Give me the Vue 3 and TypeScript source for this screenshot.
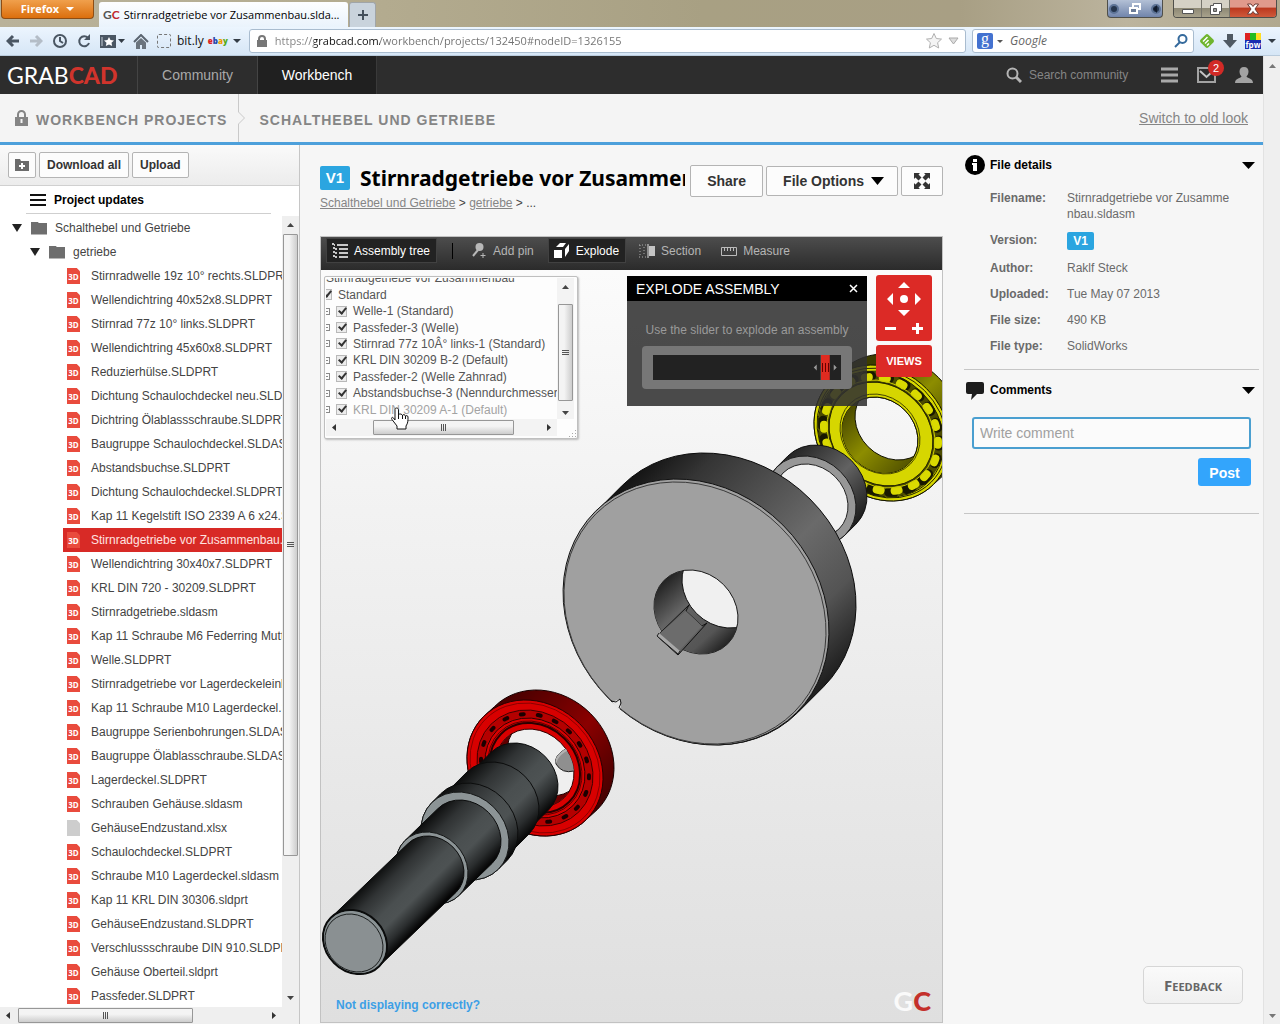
<script setup lang="ts">
import { ref } from 'vue'

interface TreeFile {
  name: string
  kind: '3d' | 'sheet'
}

interface Part {
  label: string
  shown: boolean
  dim?: boolean
}

interface Cylinder {
  id: string
  front: [number, number]
  back: [number, number]
  r: number
  face: string
}

const model = (name: string): TreeFile => ({ name, kind: '3d' })

const files: TreeFile[] = [
  model('Stirnradwelle 19z 10° rechts.SLDPRT'),
  model('Wellendichtring 40x52x8.SLDPRT'),
  model('Stirnrad 77z 10° links.SLDPRT'),
  model('Wellendichtring 45x60x8.SLDPRT'),
  model('Reduzierhülse.SLDPRT'),
  model('Dichtung Schaulochdeckel neu.SLDPRT'),
  model('Dichtring Ölablassschraube.SLDPRT'),
  model('Baugruppe Schaulochdeckel.SLDASM'),
  model('Abstandsbuchse.SLDPRT'),
  model('Dichtung Schaulochdeckel.SLDPRT'),
  model('Kap 11 Kegelstift ISO 2339 A 6 x24.SLDPRT'),
  model('Stirnradgetriebe vor Zusammenbau.sldasm'),
  model('Wellendichtring 30x40x7.SLDPRT'),
  model('KRL DIN 720 - 30209.SLDPRT'),
  model('Stirnradgetriebe.sldasm'),
  model('Kap 11 Schraube M6 Federring Mutter.SLDASM'),
  model('Welle.SLDPRT'),
  model('Stirnradgetriebe vor Lagerdeckeleinbau.sldasm'),
  model('Kap 11 Schraube M10 Lagerdeckel.SLDPRT'),
  model('Baugruppe Serienbohrungen.SLDASM'),
  model('Baugruppe Ölablasschraube.SLDASM'),
  model('Lagerdeckel.SLDPRT'),
  model('Schrauben Gehäuse.sldasm'),
  { name: 'GehäuseEndzustand.xlsx', kind: 'sheet' },
  model('Schaulochdeckel.SLDPRT'),
  model('Schraube M10 Lagerdeckel.sldasm'),
  model('Kap 11 KRL DIN 30306.sldprt'),
  model('GehäuseEndzustand.SLDPRT'),
  model('Verschlussschraube DIN 910.SLDPRT'),
  model('Gehäuse Oberteil.sldprt'),
  model('Passfeder.SLDPRT')
]

const selected = ref(11)

const parts = ref<Part[]>([
  { label: 'Welle-1 (Standard)', shown: true },
  { label: 'Passfeder-3 (Welle)', shown: true },
  { label: 'Stirnrad 77z 10Â° links-1 (Standard)', shown: true },
  { label: 'KRL DIN 30209 B-2 (Default)', shown: true },
  { label: 'Passfeder-2 (Welle Zahnrad)', shown: true },
  { label: 'Abstandsbuchse-3 (Nenndurchmesser)', shown: true },
  { label: 'KRL DIN 30209 A-1 (Default)', shown: true, dim: true }
])
const allShown = ref(true)
const explode = ref(98)
const comment = ref('')
const address = ref('https://grabcad.com/workbench/projects/132450#nodeID=1326155')
const webSearch = ref('')
const siteSearch = ref('')

// Every round section is seen along the same diagonal axis, so a circle of
// radius r becomes an ellipse turned by 45 degrees.
const major = (r: number) => r * 1.07
const minor = (r: number) => r * 0.925
const reach = (r: number) => major(r) * Math.SQRT1_2

function ring(c: [number, number], r: number): string {
  const k = reach(r)
  const arc = `A${major(r)} ${minor(r)} 45 0 0`
  return `M${c[0] + k} ${c[1] + k}${arc} ${c[0] - k} ${c[1] - k}${arc} ${c[0] + k} ${c[1] + k}Z`
}

function hull(front: [number, number], back: [number, number], r: number): string {
  const k = reach(r)
  const arc = `A${major(r)} ${minor(r)} 45 0 0`
  return (
    `M${front[0] + k} ${front[1] + k}L${back[0] + k} ${back[1] + k}` +
    `${arc} ${back[0] - k} ${back[1] - k}L${front[0] - k} ${front[1] - k}` +
    `${arc} ${front[0] + k} ${front[1] + k}Z`
  )
}

const shaft: Cylinder[] = [
  { id: 'seat', front: [498, 803], back: [520, 781], r: 38, face: '#45494a' },
  { id: 'shoulder', front: [474, 827], back: [498, 803], r: 41, face: '#45494a' },
  { id: 'collar', front: [465, 836], back: [474, 827], r: 44, face: '#8c9496' },
  { id: 'body', front: [432, 868], back: [465, 836], r: 36, face: '#8c9496' },
  { id: 'journal', front: [355, 942], back: [432, 868], r: 32, face: '#7e8688' }
]
</script>

<template>
  <div class="window">
    <header class="titlebar">
      <button class="firefox" type="button">Firefox <span class="caret white"></span></button>
      <div class="tab">
        <span class="favicon"><b class="g">G</b><b class="c">C</b></span>
        <span class="tab-name">Stirnradgetriebe vor Zusammenbau.slda...</span>
      </div>
      <button class="newtab" type="button" aria-label="New tab">
        <svg width="12" height="12" viewBox="0 0 12 12"><path d="M6 1v10M1 6h10" stroke="#44505c" stroke-width="2" /></svg>
      </button>
      <span class="grow"></span>
      <div class="mini-controls">
        <button type="button" aria-label="Previous view"><svg width="13" height="14" viewBox="0 0 13 14"><circle cx="6" cy="7" r="4" fill="#26364e" stroke="#5d7396" stroke-width="2" /></svg></button>
        <button class="wide" type="button" aria-label="Cascade"><svg width="14" height="12" viewBox="0 0 14 12"><path d="M5 4V1h7v5H9" fill="none" stroke="#fff" stroke-width="2" /><path d="M2 5h7v5H2z" fill="#6c7c98" stroke="#fff" stroke-width="2" /></svg></button>
        <button type="button" aria-label="Next view"><svg width="13" height="14" viewBox="0 0 13 14"><circle cx="7" cy="7" r="4" fill="#26364e" stroke="#5d7396" stroke-width="2" /><path d="M8 3v8L4 7z" fill="#101a2c" /></svg></button>
      </div>
      <div class="controls">
        <button type="button" aria-label="Minimize"><svg width="14" height="14" viewBox="0 0 14 14"><path d="M1.500 7.500h11v4h-11z" fill="#fff" stroke="#555" /></svg></button>
        <button type="button" aria-label="Restore"><svg width="14" height="14" viewBox="0 0 14 14"><path d="M4.500 1.500h8v8h-2v3h-9v-9h3z" fill="#fff" stroke="#555" /><path d="M4.500 6.500h3v3h-3z" fill="#999" stroke="#555" /></svg></button>
        <button class="close" type="button" aria-label="Close"><svg width="14" height="14" viewBox="0 0 14 14"><path d="M1.500 2h3.500l2 2.500L9 2h3.500L9 7l3.500 5H9L7 9.500 5 12H1.500L5 7z" fill="#fff" stroke="#6b3a35" /></svg></button>
      </div>
    </header>

    <nav class="navbar" aria-label="Browser">
      <button type="button" aria-label="Back"><svg width="14" height="14" viewBox="0 0 14 14"><path d="M7 2 2 7l5 5M2 7h11" fill="none" stroke="#4a5663" stroke-width="3" /></svg></button>
      <button type="button" aria-label="Forward" class="n2"><svg width="14" height="14" viewBox="0 0 14 14"><path d="M7 2l5 5-5 5M12 7H1" fill="none" stroke="#b4bdc7" stroke-width="3" /></svg></button>
      <button type="button" aria-label="History" class="n2"><svg width="16" height="16" viewBox="0 0 16 16"><circle cx="8" cy="8" r="6" fill="none" stroke="#4a5663" stroke-width="2" /><path d="M8 4v4l3 2" fill="none" stroke="#4a5663" stroke-width="2" /></svg></button>
      <button type="button" aria-label="Reload" class="n2"><svg width="14" height="14" viewBox="0 0 14 14"><path d="M11 4a5 5 0 1 0 1 5" fill="none" stroke="#4a5663" stroke-width="2" /><path d="M13 0v6H7z" fill="#4a5663" /></svg></button>
      <button type="button" aria-label="Bookmarks" class="n2"><svg width="25" height="15" viewBox="0 0 25 15"><path d="M0 1h16v13H0z" fill="#4a5663" /><path d="M2 3v9" stroke="#c5ced8" /><path d="m9 3 1.500 3 3.500.4-2.500 2.300.7 3.300L9 10.400 5.800 12l.7-3.300L4 6.400 7.500 6z" fill="#fff" /><path d="M18 5h7l-3.500 4z" fill="#333c46" /></svg></button>
      <button type="button" aria-label="Home" class="n3"><svg width="16" height="15" viewBox="0 0 16 15"><path d="M1 8 8 1l7 7" fill="none" stroke="#5b6570" stroke-width="2" /><path d="M3 8.500 8 4l5 4.500V15H9v-4H7v4H3z" fill="#6b747e" /></svg></button>
      <button type="button" aria-label="Bookmark" class="n3 bitly"><span class="dashed"></span>bit.ly</button>
      <button type="button" aria-label="ebay" class="ebay"><b>e</b><b>b</b><b>a</b><b>y</b></button>
      <span class="caret"></span>
      <div class="urlbox">
        <svg width="10" height="12" viewBox="0 0 10 12"><path d="M2 6V4a3 3 0 0 1 6 0v2" fill="none" stroke="#777" stroke-width="2" /><path d="M0 5h10v7H0z" fill="#777" /></svg>
        <input v-model="address" class="url" type="text" aria-label="Address" />
        <svg width="18" height="18" viewBox="0 0 18 18"><path d="m9 1.500 2.300 5 5.200.6-3.900 3.600 1.100 5.300L9 13.300 4.300 16l1.100-5.300L1.500 7.100l5.200-.6z" fill="#f4f4f4" stroke="#b0b0b0" /></svg>
        <svg class="drop" width="11" height="8" viewBox="0 0 11 8"><path d="M1 1h9L5.500 7z" fill="#ddd" stroke="#aaa" /></svg>
      </div>
      <div class="searchbox">
        <span class="gicon">g</span>
        <span class="caret small"></span>
        <input v-model="webSearch" type="text" placeholder="Google" aria-label="Web search" />
        <svg width="14" height="14" viewBox="0 0 14 14"><circle cx="8.500" cy="5" r="4" fill="none" stroke="#356a9c" stroke-width="2" /><path d="m6 8-5 5" stroke="#356a9c" stroke-width="2" /></svg>
      </div>
      <button type="button" aria-label="Feedly"><svg width="16" height="16" viewBox="0 0 16 16"><rect x="2.500" y="2.500" width="11" height="11" rx="2" transform="rotate(45 8 8)" fill="#6fb52e" /><path d="m4 8.500 4.500-4.500M6 10.500 9.500 7M8 12.500l2-2" stroke="#fff" stroke-width="1.500" /></svg></button>
      <button type="button" aria-label="Downloads" class="n3"><svg width="14" height="14" viewBox="0 0 14 14"><path d="M4 0h6v6h4l-7 8-7-8h4z" fill="#4f5963" /></svg></button>
      <button type="button" class="fpw n3">fpw</button>
      <span class="caret last"></span>
    </nav>

    <div class="viewport">
      <div class="page">
        <header class="sitebar">
          <a class="logo" href="#">GRAB<b>CAD</b></a>
          <a class="sitelink" href="#">Community</a>
          <a class="sitelink active" href="#">Workbench</a>
          <span class="grow"></span>
          <label class="sitesearch">
            <svg width="16" height="16" viewBox="0 0 16 16"><circle cx="6.500" cy="6.500" r="5" fill="none" stroke="#b5b5b5" stroke-width="2" /><path d="m10 10 5 5" stroke="#b5b5b5" stroke-width="3" /></svg>
            <input v-model="siteSearch" type="text" placeholder="Search community" aria-label="Search community" />
          </label>
          <button type="button" aria-label="Menu"><svg width="17" height="16" viewBox="0 0 17 16"><path d="M0 2h17M0 8h17M0 14h17" stroke="#a9a9a9" stroke-width="3" /></svg></button>
          <button type="button" class="mail" aria-label="Messages">
            <svg width="19" height="16" viewBox="0 0 19 16"><path d="M1 1h17v14H1z" fill="none" stroke="#a3a3a3" stroke-width="2" /><path d="m3 4 6.500 6L16 4" fill="none" stroke="#c4c4c4" stroke-width="2" /></svg>
            <span class="badge">2</span>
          </button>
          <button type="button" class="user" aria-label="Account"><svg width="18" height="16" viewBox="0 0 18 16"><path d="M9 0c3 0 4.500 2 4.500 4.500 0 2-1 4-2 5 .2 1.500 6.500 1.500 6.500 6.500H0c0-5 6.300-5 6.500-6.500-1-1-2-3-2-5C4.500 2 6 0 9 0z" fill="#a3a3a3" /></svg></button>
        </header>

        <nav class="crumbs" aria-label="Projects">
          <a class="crumb first" href="#">
            <svg width="13" height="16" viewBox="0 0 13 16"><path d="M3 8V4.500a3.500 3.500 0 0 1 7 0V8" fill="none" stroke="#858585" stroke-width="2" /><path d="M0 7h13v9H0z" fill="#858585" /><path d="M6.500 9v4" stroke="#f4f4f4" stroke-width="2" /></svg>
            WORKBENCH PROJECTS
          </a>
          <svg class="chevron" width="8" height="48" viewBox="0 0 8 48"><path d="M.5 0v18l6 6-6 6v18" fill="none" stroke="#c9c9c9" /></svg>
          <a class="crumb" href="#">SCHALTHEBEL UND GETRIEBE</a>
          <span class="grow"></span>
          <a class="switch" href="#">Switch to old look</a>
        </nav>

        <div class="columns">
          <aside class="sidebar">
            <div class="side-tools">
              <button class="btn" type="button" aria-label="New folder"><svg width="14" height="12" viewBox="0 0 14 12"><path d="M0 0h5l1 2h8v10H0z" fill="#6b6b6b" /><path d="M7 4v6M4 7h6" stroke="#fff" stroke-width="2" /></svg></button>
              <button class="btn" type="button">Download all</button>
              <button class="btn" type="button">Upload</button>
            </div>
            <a class="updates" href="#"><svg width="16" height="12" viewBox="0 0 16 12"><path d="M0 1h16M0 6h16M0 11h16" stroke="#111" stroke-width="2" /></svg>Project updates</a>
            <div class="tree-area">
              <ul class="tree">
                <li class="folder root"><span class="twist"></span><span class="dir"></span>Schalthebel und Getriebe</li>
                <li class="folder child"><span class="twist"></span><span class="dir"></span>getriebe</li>
                <li v-for="(f, i) in files" :key="f.name" class="file" :class="{ selected: i === selected }" @click="selected = i">
                  <span class="doc" :class="f.kind"><template v-if="f.kind === '3d'">3D</template></span>{{ f.name }}
                </li>
              </ul>
              <div class="vbar">
                <svg width="7" height="4" viewBox="0 0 7 4"><path d="M0 4 3.500 0 7 4z" fill="#444" /></svg>
                <div class="thumb tall"><i></i><i></i><i></i></div>
                <svg width="7" height="4" viewBox="0 0 7 4"><path d="M0 0h7L3.500 4z" fill="#444" /></svg>
              </div>
            </div>
            <div class="hbar">
              <svg width="4" height="7" viewBox="0 0 4 7"><path d="M4 0v7L0 3.500z" fill="#333" /></svg>
              <div class="thumb flat"><i></i><i></i><i></i></div>
              <span class="grow"></span>
              <svg width="4" height="7" viewBox="0 0 4 7"><path d="M0 0v7l4-3.500z" fill="#333" /></svg>
            </div>
          </aside>

          <main class="main">
            <div class="heading">
              <span class="version big">V1</span>
              <h1>Stirnradgetriebe vor Zusammenbau.sldasm</h1>
              <button class="btn large share" type="button">Share</button>
              <button class="btn large" type="button">File Options <svg width="13" height="8" viewBox="0 0 13 8"><path d="M0 0h13L6.500 8z" fill="#000" /></svg></button>
              <button class="btn large expand" type="button" aria-label="Full screen"><svg width="16" height="16" viewBox="0 0 16 16"><path d="M0 0h6L4.500 1.500l3 3-3 3-3-3L0 6zM16 0v6l-1.500-1.500-3 3-3-3 3-3L10 0zM0 16v-6l1.500 1.500 3-3 3 3-3 3L6 16zM16 16h-6l1.500-1.500-3-3 3-3 3 3L16 10z" fill="#333" /></svg></button>
            </div>
            <p class="path"><a href="#">Schalthebel und Getriebe</a> &gt; <a href="#">getriebe</a> &gt; ...</p>

            <section class="viewer" aria-label="Viewer">
              <div class="viewer-bar">
                <button class="tool on" type="button"><svg width="16" height="15" viewBox="0 0 16 15"><path d="M5 2h11M7 6h9M7 10h9M7 14h9" stroke="#fff" stroke-width="1.500" /><path d="M0 1h2M2 2h1M3 6h2M3 10h2M3 14h2M2 4v10" stroke="#fff" stroke-width="1.500" stroke-dasharray="2 2" /></svg>Assembly tree</button>
                <span class="sep"></span>
                <button class="tool pin" type="button"><svg width="15" height="15" viewBox="0 0 15 15"><circle cx="7.500" cy="4" r="4" fill="#b8b8b8" /><path d="M6 7 1 13" stroke="#b8b8b8" stroke-width="2" /><path d="M11 10v5M8.500 12.500h5" stroke="#b8b8b8" /></svg>Add pin</button>
                <button class="tool on" type="button"><svg width="16" height="15" viewBox="0 0 16 15"><path d="M0 7h8v8H0zM2 4l4-4h6L9 4zM11 6l4-5v7l-4 6z" fill="#fff" /></svg>Explode</button>
                <button class="tool section" type="button"><svg width="16" height="14" viewBox="0 0 16 14"><path d="M0 1h7M0 13h7M1 1v12M5 3v8" stroke="#aaa" stroke-dasharray="1 2" /><path d="M9 0v14" stroke="#ddd" /><path d="M10 2h6v10h-6z" fill="#c4c4c4" /></svg>Section</button>
                <button class="tool" type="button"><svg width="16" height="10" viewBox="0 0 16 10"><path d="M.5 1.500h15v8H.5zM3.500 2v3M6.500 2v3M9.500 2v3M12.500 2v3" fill="none" stroke="#bbb" /></svg>Measure</button>
              </div>

              <div class="stage">
                <svg class="scene" viewBox="321 270 621 752" preserveAspectRatio="xMidYMid slice" role="img" aria-label="Exploded gearbox assembly">
                  <defs>
                    <linearGradient v-for="s in shaft" :id="'g-' + s.id" :key="s.id" gradientUnits="userSpaceOnUse" :x1="s.front[0] - reach(s.r)" :y1="s.front[1] - reach(s.r)" :x2="s.front[0] + reach(s.r)" :y2="s.front[1] + reach(s.r)">
                      <stop offset="0" stop-color="#0c0d0d" /><stop offset=".22" stop-color="#303334" /><stop offset=".5" stop-color="#4a4f50" /><stop offset=".66" stop-color="#4d5253" /><stop offset=".85" stop-color="#2a2d2e" /><stop offset="1" stop-color="#050505" />
                    </linearGradient>
                    <linearGradient id="g-gear" gradientUnits="userSpaceOnUse" x1="600" y1="490" x2="825" y2="715">
                      <stop offset="0" stop-color="#0a0a0a" /><stop offset=".18" stop-color="#353535" /><stop offset=".55" stop-color="#6a6a6a" /><stop offset=".75" stop-color="#545454" /><stop offset=".92" stop-color="#222" /><stop offset="1" stop-color="#111" />
                    </linearGradient>
                    <linearGradient id="g-bore" gradientUnits="userSpaceOnUse" x1="664" y1="580" x2="728" y2="650">
                      <stop offset="0" stop-color="#222" /><stop offset=".35" stop-color="#646464" /><stop offset=".75" stop-color="#555" /><stop offset="1" stop-color="#161616" />
                    </linearGradient>
                    <linearGradient id="g-bush" gradientUnits="userSpaceOnUse" x1="785" y1="460" x2="855" y2="530">
                      <stop offset="0" stop-color="#262626" /><stop offset=".5" stop-color="#626262" /><stop offset="1" stop-color="#181818" />
                    </linearGradient>
                    <linearGradient id="g-yellow" gradientUnits="userSpaceOnUse" x1="845" y1="400" x2="915" y2="470">
                      <stop offset="0" stop-color="#3d3d00" /><stop offset=".5" stop-color="#8d8d00" /><stop offset="1" stop-color="#4a4a00" />
                    </linearGradient>
                    <linearGradient id="g-red" gradientUnits="userSpaceOnUse" x1="490" y1="720" x2="600" y2="820">
                      <stop offset="0" stop-color="#4a0000" /><stop offset=".5" stop-color="#8a0000" /><stop offset="1" stop-color="#3a0000" />
                    </linearGradient>
                    <clipPath id="bore"><path :d="ring([696, 612], 42)" /></clipPath>
                    <clipPath id="bush"><path :d="ring([811, 501], 37)" /></clipPath>
                    <clipPath id="ybore"><path :d="ring([880, 435], 38)" /></clipPath>
                    <clipPath id="rbore"><path :d="ring([535, 768], 39)" /></clipPath>
                  </defs>

                  <!-- Upper bearing -->
                  <path :d="hull([882, 433], [894, 422], 68) + ring([880, 435], 38)" fill="url(#g-yellow)" fill-rule="evenodd" stroke="#111100" />
                  <path :d="ring([882, 433], 68) + ring([880, 435], 38)" fill="#d6d600" fill-rule="evenodd" stroke="#111100" />
                  <path :d="ring([882, 433], 65)" fill="none" stroke="#222200" />
                  <path :d="ring([881, 434], 57)" fill="none" stroke="#4c4c00" stroke-width="11" />
                  <path :d="ring([881, 434], 58)" fill="none" stroke="#181800" stroke-width="10" stroke-dasharray="5 13" stroke-linecap="round" />
                  <path :d="ring([881, 434], 57)" fill="none" stroke="#dada00" stroke-width="8" stroke-dasharray="4 14" stroke-linecap="round" />
                  <path :d="ring([881, 434], 63)" fill="none" stroke="#222200" />
                  <path :d="ring([881, 434], 54)" fill="none" stroke="#d0d000" />
                  <path :d="ring([881, 434], 52)" fill="none" stroke="#222200" />
                  <path :d="ring([880, 434], 40)" fill="none" stroke="#444400" />
                  <g clip-path="url(#ybore)">
                    <path :d="ring([880, 435], 39) + ring([893, 422], 38)" fill="url(#g-yellow)" fill-rule="evenodd" stroke="#111100" />
                  </g>

                  <!-- Spacer bushing -->
                  <path :d="hull([811, 501], [822, 490], 45)" fill="url(#g-bush)" stroke="#111" />
                  <path :d="ring([811, 501], 45)" fill="#979797" stroke="#1a1a1a" />
                  <path :d="ring([811, 501], 37)" fill="#f2f2f2" stroke="#222" />
                  <g clip-path="url(#bush)"><path :d="ring([811, 501], 38) + ring([816, 496], 38)" fill="#353535" fill-rule="evenodd" /></g>

                  <!-- Spur gear -->
                  <path :d="hull([697, 612], [723, 586], 133)" fill="url(#g-gear)" stroke="#0b0b0b" />
                  <path :d="ring([696, 612], 133)" fill="#a0a0a0" stroke="#111" />
                  <path :d="ring([695, 613], 131)" fill="#a0a0a0" stroke="#3a3a3a" />
                  <path d="M612 702l8-3 1 8-3 3z" fill="#e8e8e8" />
                  <path d="M611 701l5 1 4-3 1 4-2 5" fill="none" stroke="#111" />
                  <path :d="ring([696, 612], 42)" fill="#f0f0f0" stroke="#1a1a1a" />
                  <g clip-path="url(#bore)">
                    <path :d="ring([696, 612], 43) + ring([724, 586], 42)" fill="url(#g-bore)" fill-rule="evenodd" stroke="#111" />
                  </g>
                  <path d="M689 605 686 611 702 626 707 623 678 655 657 636z" fill="#5f5f5f" stroke="#111" />
                  <path d="m686 611 16 15-23 25-20-17z" fill="#6c6c6c" />
                  <path d="m659 633-2 3 21 18 2-3" fill="#a8a8a8" stroke="#222" />

                  <!-- Lower bearing -->
                  <path :d="hull([535, 768], [546, 758], 68)" fill="url(#g-red)" stroke="#160000" />
                  <path :d="ring([535, 768], 68)" fill="#d80000" stroke="#260000" />
                  <path :d="ring([535, 768], 65)" fill="none" stroke="#8a0000" />
                  <path :d="ring([535, 768], 54)" fill="none" stroke="#b40000" stroke-width="7" />
                  <path :d="ring([535, 768], 54)" fill="none" stroke="#1c0000" stroke-width="4" stroke-dasharray="3 14" stroke-linecap="round" />
                  <path :d="ring([535, 768], 58)" fill="none" stroke="#3a0000" />
                  <path :d="ring([535, 768], 50)" fill="none" stroke="#2a0000" />
                  <path :d="ring([535, 768], 47)" fill="none" stroke="#5a0000" />
                  <path :d="ring([535, 768], 45)" fill="none" stroke="#2a0000" stroke-width="2" />
                  <path :d="ring([535, 768], 39)" fill="#efefef" stroke="#300000" />
                  <g clip-path="url(#rbore)">
                    <path d="M578 741 567 748q-14 8-11 16 6 10 18 7l8-4z" fill="#8f8f8f" stroke="#222" />
                    <path d="M567 748q-14 8-11 16 3-11 14-14z" fill="#b2b2b2" />
                    <path :d="ring([535, 768], 40) + ring([546, 757], 39)" fill="url(#g-red)" fill-rule="evenodd" stroke="#200000" />
                  </g>

                  <!-- Shaft, drawn from the far end to the near end -->
                  <template v-for="s in shaft" :key="s.id">
                    <path :d="hull(s.front, s.back, s.r)" :fill="'url(#g-' + s.id + ')'" stroke="#0b0c0c" />
                    <path v-if="s.face === '#45494a'" :d="ring(s.front, s.r)" :fill="'url(#g-' + s.id + ')'" stroke="#0b0c0c" />
                    <path v-else :d="ring(s.front, s.r)" :fill="s.face" stroke="#151717" />
                  </template>
                  <path :d="ring([355, 942], 32)" fill="#50585a" stroke="#0b0c0c" stroke-width="2" />
                  <path :d="ring([355, 942], 31)" fill="#8a9294" />
                  <path :d="ring([354, 943], 29)" fill="#8a9092" stroke="#1a1d1d" />
                </svg>

                <div class="assembly">
                  <div class="assembly-list">
                    <div class="part-title">Stirnradgetriebe vor Zusammenbau</div>
                    <label class="part top"><input v-model="allShown" type="checkbox" />Standard</label>
                    <label v-for="p in parts" :key="p.label" class="part" :class="{ dim: p.dim }"><span class="plus"></span><input v-model="p.shown" type="checkbox" />{{ p.label }}</label>
                  </div>
                  <div class="vbar pale">
                    <svg width="7" height="4" viewBox="0 0 7 4"><path d="M0 4 3.500 0 7 4z" fill="#444" /></svg>
                    <div class="thumb mid"><i></i><i></i><i></i></div>
                    <svg width="7" height="4" viewBox="0 0 7 4"><path d="M0 0h7L3.500 4z" fill="#444" /></svg>
                  </div>
                  <div class="hbar pale">
                    <svg width="4" height="7" viewBox="0 0 4 7"><path d="M4 0v7L0 3.500z" fill="#333" /></svg>
                    <div class="thumb flat"><i></i><i></i><i></i></div>
                    <svg width="4" height="7" viewBox="0 0 4 7"><path d="M0 0v7l4-3.500z" fill="#333" /></svg>
                  </div>
                  <svg class="grip" width="8" height="8" viewBox="0 0 8 8"><path d="M6 0h1v1H6zM6 3h1v1H6zM6 6h1v1H6zM3 3h1v1H3zM3 6h1v1H3zM0 6h1v1H0z" fill="#aaa" /></svg>
                  <svg class="pointer" width="18" height="23" viewBox="0 0 18 23"><path d="M5.500 1C4 1 4 2 4 3v10l-1.500-2C1 9.500 0 11 1 12.500L6 19v3h9v-3c2-3 2-5 2-9 0-1.500-2-2-2.500-.5C14.500 7.500 12 7 11.500 8.500 11 7 9 6.500 7.500 7.500V3c0-1-.5-2-2-2z" fill="#fff" stroke="#111" /><path d="M7.500 7v5M11.500 8v4M14.500 9v3" stroke="#111" /></svg>
                </div>

                <section class="explode">
                  <header>EXPLODE ASSEMBLY <button type="button" aria-label="Close panel"><svg width="9" height="9" viewBox="0 0 9 9"><path d="m1 1 7 7M8 1 1 8" stroke="#fff" stroke-width="1.500" /></svg></button></header>
                  <label for="explode">Use the slider to explode an assembly</label>
                  <div class="slider"><input id="explode" v-model="explode" type="range" min="0" max="100" /></div>
                </section>

                <div class="orbit">
                  <button type="button" aria-label="Navigate"><svg width="56" height="66" viewBox="0 0 56 66"><path d="m28 7 6 6H22zM28 41l6-6H22zM11 24l6-6v12zM45 24l-6-6v12z" fill="#fff" /><circle cx="28" cy="24" r="4" fill="#fff" /><path d="M9 53.500h11M36 53.500h11M41.500 48v11" stroke="#fff" stroke-width="3" /></svg></button>
                  <button class="views" type="button">VIEWS</button>
                </div>

                <a class="trouble" href="#">Not displaying correctly?</a>
                <span class="mark">G<b>C</b></span>
              </div>
            </section>
          </main>

          <aside class="info">
            <h2>
              <svg width="20" height="20" viewBox="0 0 20 20"><circle cx="10" cy="10" r="10" fill="#000" /><path d="M8 4h4v3H8zM7 8h5v8H8v-6H7z" fill="#fff" /></svg>
              File details
              <svg class="fold" width="13" height="7" viewBox="0 0 13 7"><path d="M0 0h13L6.500 7z" /></svg>
            </h2>
            <dl>
              <dt>Filename:</dt><dd>Stirnradgetriebe vor Zusammenbau.sldasm</dd>
              <dt>Version:</dt><dd><span class="version">V1</span></dd>
              <dt>Author:</dt><dd>Raklf Steck</dd>
              <dt>Uploaded:</dt><dd>Tue May 07 2013</dd>
              <dt>File size:</dt><dd>490 KB</dd>
              <dt>File type:</dt><dd>SolidWorks</dd>
            </dl>
            <hr />
            <h2>
              <svg width="20" height="20" viewBox="0 0 20 20"><path d="M3 2h14q2 0 2 2v8q0 2-2 2h-5l-6 6 1-6H3q-2 0-2-2V4q0-2 2-2z" fill="#1c1c1c" /></svg>
              Comments
              <svg class="fold" width="13" height="7" viewBox="0 0 13 7"><path d="M0 0h13L6.500 7z" /></svg>
            </h2>
            <form class="comment" @submit.prevent>
              <input v-model="comment" type="text" placeholder="Write comment" aria-label="Write comment" />
              <button type="submit">Post</button>
            </form>
            <hr />
            <button class="feedback" type="button">Feedback</button>
          </aside>
        </div>
      </div>

      <div class="pagebar">
        <svg width="7" height="4" viewBox="0 0 7 4"><path d="M0 4 3.500 0 7 4z" fill="#777" /></svg>
        <svg width="7" height="4" viewBox="0 0 7 4"><path d="M0 0h7L3.500 4z" fill="#777" /></svg>
      </div>
    </div>
  </div>
</template>

<style>
body {
  margin: 0;
  background: #f5f5f5;
}
</style>

<style scoped>
* {
  box-sizing: border-box;
}
.window {
  display: flex;
  flex-direction: column;
  height: 100vh;
  overflow: hidden;
  font: 12px/16px 'Liberation Sans', Arial, sans-serif;
  color: #444;
}
button {
  font: inherit;
  color: inherit;
  padding: 0;
  border: 0;
  background: none;
  cursor: pointer;
}
input {
  font: inherit;
  min-width: 0;
  border: 0;
  background: none;
  outline: none;
  padding: 0;
  margin: 0;
}
svg {
  display: block;
  flex: none;
}
.grow {
  flex: 1;
}
.caret {
  flex: none;
  border: 4px solid transparent;
  border-bottom: 0;
  border-top-color: #333c46;
}

/* Browser frame */
.titlebar {
  display: flex;
  flex: none;
  align-items: flex-start;
  height: 27px;
  padding: 0 3px 0 1px;
  background: linear-gradient(90deg, #b9b29a 0, #b3ab8f 30%, #a8a083 55%, #a89f84 75%, #bcb49e 88%, #b0a88e 100%);
}
.firefox {
  display: flex;
  align-items: center;
  justify-content: center;
  gap: 7px;
  width: 93px;
  height: 19px;
  border: 1px solid #8d4d14;
  border-top: 0;
  border-radius: 0 0 4px 4px;
  background: linear-gradient(#f0a04c, #dc6f0d);
  color: #fff;
  font: bold 11px/16px 'Open Sans', sans-serif;
}
.white {
  border-top-color: #fff;
}
.tab {
  display: flex;
  align-items: center;
  gap: 4px;
  width: 249px;
  height: 25px;
  margin: 2px 1px 0 5px;
  padding: 0 4px;
  border-radius: 3px 3px 0 0;
  background: linear-gradient(#fdfeff, #eaf3fc);
  font: 11px/20px 'Open Sans', sans-serif;
  color: #000;
}
.tab-name {
  white-space: nowrap;
}
.favicon {
  font: 12px/20px Lato, sans-serif;
}
.favicon .g {
  color: #555;
}
.favicon .c {
  color: #c0282d;
}
.newtab {
  display: grid;
  place-items: center;
  width: 27px;
  height: 25px;
  margin-top: 2px;
  border: 1px solid #a0a5a8;
  border-bottom: 0;
  border-radius: 3px 3px 0 0;
  background: #c9d3dc;
}
.mini-controls,
.controls {
  display: flex;
  border: 1px solid #4f4f4a;
  border-top: 0;
  border-radius: 0 0 4px 4px;
  overflow: hidden;
  height: 18px;
}
.mini-controls {
  width: 56px;
  margin-right: 10px;
  background: linear-gradient(#b3c0d6, #7185ab);
}
.controls {
  width: 104px;
}
.mini-controls button,
.controls button {
  display: grid;
  place-items: center;
  flex: 1;
}
.mini-controls .wide {
  flex: 2;
}
.controls button {
  border-right: 1px solid #77756c;
  background: linear-gradient(#d5d1c5 0 45%, #8e8975 50%, #a8a28c);
}
.controls .close {
  flex: none;
  width: 46px;
  border: 0;
  background: linear-gradient(#e09a8c 0 40%, #bc3a20 50%, #cf5a3b);
}
.navbar {
  display: flex;
  flex: none;
  align-items: center;
  height: 29px;
  padding: 0 4px 0 6px;
  background: linear-gradient(#ecf5fe, #d6e6f6);
  border-bottom: 1px solid #b9cbdc;
  font: 12px/16px 'Open Sans', sans-serif;
  color: #111;
}
.n2 {
  margin-left: 9px;
}
.n3 {
  margin-left: 8px;
}
.bitly {
  display: flex;
  align-items: center;
  gap: 6px;
}
.dashed {
  width: 14px;
  height: 14px;
  border: 1px dashed #777;
  border-radius: 2px;
}
.ebay {
  margin: 0 5px 0 4px;
  font: bold 8px/12px 'Open Sans', sans-serif;
}
.ebay b:nth-child(1) { color: #d22; }
.ebay b:nth-child(2) { color: #24a; }
.ebay b:nth-child(3) { color: #e90; }
.ebay b:nth-child(4) { color: #5a1; }
.urlbox,
.searchbox {
  display: flex;
  align-items: center;
  height: 24px;
  border: 1px solid #a9bccf;
  border-radius: 3px;
  background: #fff;
}
.urlbox {
  flex: 1;
  margin: 0 6px 0 8px;
  padding: 0 6px 0 7px;
  font-size: 11px;
}
.url {
  flex: 1;
  margin: 0 8px;
  background: linear-gradient(90deg, #808080 39px, #111 39px 105px, #707070 105px);
  -webkit-background-clip: text;
  background-clip: text;
  color: transparent;
}
.drop {
  margin-left: 5px;
}
.searchbox {
  width: 222px;
  padding: 0 5px 0 4px;
  margin-right: 5px;
}
.searchbox input {
  flex: 1;
  font-style: italic;
}
.searchbox input::placeholder {
  color: #666;
}
.gicon {
  width: 16px;
  height: 16px;
  border-radius: 2px;
  background: #4472d0;
  color: #fff;
  font: 16px/12px 'Liberation Serif', serif;
  text-align: center;
}
.small {
  border-width: 3px;
  border-bottom: 0;
  border-top-color: #555;
  margin: 0 7px 0 4px;
}
.fpw {
  width: 16px;
  height: 16px;
  padding-top: 6px;
  background: linear-gradient(90deg, #d22 33%, #2b2 33% 66%, #fd2 66%) 0 0 / 100% 7px no-repeat, #1a2bb0;
  color: #fff;
  font: bold 8px/9px 'Open Sans', sans-serif;
}
.last {
  margin-left: 7px;
}

/* Site */
.viewport {
  display: flex;
  flex: 1;
  min-height: 0;
}
.page {
  display: flex;
  flex: 1;
  flex-direction: column;
  min-width: 0;
  background: #f6f6f6;
}
.pagebar {
  display: flex;
  flex-direction: column;
  align-items: center;
  justify-content: space-between;
  width: 17px;
  padding: 8px 0 6px;
  background: #efefef;
  border-left: 1px solid #e2e2e2;
}
.sitebar {
  display: flex;
  flex: none;
  align-items: center;
  height: 38px;
  padding-right: 10px;
  background: #2d2d2d;
}
.logo {
  width: 137px;
  padding-left: 7px;
  color: #fff;
  text-decoration: none;
  font: 23px/38px Lato, sans-serif;
}
.logo b {
  color: #d0342c;
  font-weight: 900;
}
.sitelink {
  width: 120px;
  border-left: 1px solid #444;
  color: #a9a9a9;
  text-align: center;
  text-decoration: none;
  font-size: 14px;
  line-height: 38px;
}
.sitelink.active {
  background: #202020;
  color: #fff;
  border-right: 1px solid #3a3a3a;
}
.sitesearch {
  display: flex;
  align-items: center;
  gap: 7px;
  width: 155px;
}
.sitesearch input {
  flex: 1;
  color: #ccc;
}
.sitesearch input::placeholder {
  color: #858585;
}
.mail {
  position: relative;
  margin: 0 19px;
}
.badge {
  position: absolute;
  top: -7px;
  left: 11px;
  width: 16px;
  height: 16px;
  border-radius: 50%;
  background: #d22a26;
  color: #fff;
  font-size: 11px;
  line-height: 16px;
  text-align: center;
}
.crumbs {
  display: flex;
  flex: none;
  align-items: center;
  height: 51px;
  padding: 0 15px 0 15px;
  border-bottom: 3px solid #4da0db;
  background: #f4f4f4;
}
.crumb {
  display: flex;
  align-items: center;
  gap: 8px;
  padding-top: 4px;
  color: #858585;
  font: bold 14px/16px 'Liberation Sans', sans-serif;
  letter-spacing: 1px;
  text-decoration: none;
}
.crumb svg {
  margin: -2px 0 2px;
}
.chevron {
  margin: 0 13px 0 11px;
}
.switch {
  color: #858585;
  font-size: 14px;
}
.columns {
  display: flex;
  flex: 1;
  min-height: 0;
}
.sidebar {
  display: flex;
  flex: none;
  flex-direction: column;
  width: 300px;
  border-right: 1px solid #c6c6c6;
  background: #fff;
}
.side-tools {
  display: flex;
  gap: 3px;
  height: 41px;
  padding: 7px 8px;
  border-bottom: 1px solid #d0d0d0;
  background: linear-gradient(#fafafa, #ececec);
}
.btn {
  display: flex;
  align-items: center;
  justify-content: center;
  height: 26px;
  padding: 0 7px;
  border: 1px solid #b4b4b4;
  border-radius: 2px;
  background: #fcfcfc;
  color: #333;
  font-weight: bold;
  white-space: nowrap;
}
.side-tools .btn:first-child {
  padding: 0 6px;
}
.updates {
  display: flex;
  align-items: center;
  gap: 8px;
  flex: none;
  height: 28px;
  margin: 0 28px 2px 26px;
  padding-left: 4px;
  border-bottom: 1px solid #cfcfcf;
  color: #000;
  font-weight: bold;
  text-decoration: none;
}
.tree-area {
  display: flex;
  flex: 1;
  min-height: 0;
}
.tree {
  flex: 1;
  min-width: 0;
  margin: 0;
  padding: 0;
  overflow: hidden;
  list-style: none;
  line-height: 24px;
  white-space: nowrap;
}
.folder {
  display: flex;
  align-items: center;
}
.root {
  padding-left: 12px;
}
.child {
  padding-left: 30px;
}
.twist {
  border: 5px solid transparent;
  border-top: 8px solid #222;
  border-bottom: 0;
}
.dir {
  width: 16px;
  height: 13px;
  margin: 0 8px 0 9px;
  background: #6e6e6e;
  clip-path: polygon(0 0, 38% 0, 50% 12%, 100% 12%, 100% 100%, 0 100%);
}
.file {
  display: flex;
  align-items: center;
  height: 24px;
  margin-left: 63px;
  padding-left: 4px;
}
.file.selected {
  background: #d82a26;
  color: #ffe3e0;
}
.doc {
  flex: none;
  width: 13px;
  height: 16px;
  margin-right: 11px;
  background: #e94b3d;
  clip-path: polygon(0 0, 75% 0, 100% 20%, 100% 100%, 0 100%);
  color: #fff;
  font: bold 8px/18px 'Open Sans', sans-serif;
  text-align: center;
}
.doc.sheet {
  background: #cdcdcd;
}
.vbar {
  display: flex;
  flex: none;
  flex-direction: column;
  align-items: center;
  justify-content: space-between;
  width: 17px;
  padding: 7px 0;
  background: #efefef;
}
.hbar {
  display: flex;
  flex: none;
  align-items: center;
  height: 17px;
  padding: 0 23px 0 6px;
  background: #efefef;
}
.thumb {
  display: flex;
  align-items: center;
  justify-content: center;
  gap: 1px;
  border: 1px solid #979797;
  border-radius: 1px;
}
.thumb i {
  background: #555;
}
.vbar .thumb {
  flex-direction: column;
  width: 15px;
  background: linear-gradient(90deg, #f4f4f4 40%, #cdcdcd);
}
.vbar .thumb i {
  width: 7px;
  height: 1px;
}
.vbar .tall {
  height: 80%;
  margin: 7px 0 auto;
}
.hbar .thumb {
  width: 175px;
  height: 15px;
  margin-left: 8px;
  background: linear-gradient(#f4f4f4 40%, #cdcdcd);
}
.hbar .thumb i {
  width: 1px;
  height: 7px;
}

/* Centre column */
.main {
  display: flex;
  flex: 1;
  flex-direction: column;
  min-width: 0;
  padding-left: 20px;
}
.heading {
  display: flex;
  align-items: center;
  gap: 3px;
  height: 32px;
  margin-top: 20px;
}
.version {
  display: inline-block;
  padding: 0 6px;
  border-radius: 2px;
  background: #2ba5e0;
  color: #fff;
  font-weight: bold;
  line-height: 18px;
}
.version.big {
  flex: none;
  width: 30px;
  margin: -6px 7px 0 0;
  padding: 0;
  font-size: 15px;
  line-height: 24px;
  text-align: center;
}
h1 {
  flex: 1;
  min-width: 0;
  margin: -6px 2px 0 0;
  overflow: hidden;
  color: #000;
  font: bold 21px/30px 'Noto Sans', sans-serif;
  white-space: nowrap;
}
.btn.large {
  flex: none;
  gap: 7px;
  height: 30px;
  padding: 0 13px 0 16px;
  font-size: 14px;
}
.btn.share {
  height: 32px;
  padding: 0 16px;
}
.btn.expand {
  padding: 0 12px;
}
.path {
  margin: -2px 0 25px;
}
.path a {
  color: #858585;
}
.viewer {
  display: flex;
  flex: 1;
  flex-direction: column;
  min-height: 0;
  border: 1px solid #c2c2c2;
  margin-bottom: 1px;
}
.viewer-bar {
  display: flex;
  flex: none;
  align-items: center;
  height: 33px;
  padding: 0 5px 6px;
  background: linear-gradient(#4d4d4d, #2b2b2b);
}
.tool {
  display: flex;
  align-items: center;
  gap: 6px;
  height: 25px;
  padding: 0 6px;
  border: 1px solid transparent;
  color: #b5b5b5;
}
.tool.on {
  border-color: #414141;
  background: #222;
  color: #fff;
  padding: 0 6px 0 5px;
}
.sep {
  width: 1px;
  height: 16px;
  margin: 0 12px 0 15px;
  background: #000;
}
.pin {
  margin-right: 7px;
}
.section {
  margin: 0 6px;
}
.stage {
  position: relative;
  flex: 1;
  min-height: 0;
  overflow: hidden;
  background: linear-gradient(#fbfbfb, #dfdfdf);
}
.scene {
  width: 100%;
  height: 100%;
}
.assembly {
  position: absolute;
  top: 6px;
  left: 3px;
  display: grid;
  grid-template: 1fr 17px / 1fr 17px;
  width: 254px;
  height: 163px;
  padding: 1px 3px 2px 1px;
  border: 1px solid #bfbfbf;
  border-radius: 2px;
  background: #fdfdfd;
  box-shadow: 1px 1px 2px #bbb;
}
.assembly-list {
  display: grid;
  grid-template-rows: repeat(9, 1fr);
  height: 148px;
  margin-top: -8px;
  overflow: hidden;
  color: #555;
  white-space: nowrap;
  clip-path: inset(8px 0 0 0);
}
.part {
  display: flex;
  align-items: center;
  gap: 6px;
}
.part.top {
  margin-left: -5px;
}
.part.dim {
  color: #a3a3a3;
}
.part input {
  appearance: none;
  flex: none;
  width: 11px;
  height: 11px;
  border: 1px solid #b9b9b9;
  background: #ececec;
}
.part input:checked::after {
  content: '';
  display: block;
  width: 3px;
  height: 6px;
  margin: -1px 0 0 3px;
  border: solid #333;
  border-width: 0 2px 2px 0;
  transform: rotate(40deg);
}
.plus {
  width: 4px;
  height: 7px;
  border: 1px solid #8a8a8a;
  border-left: 0;
  background: linear-gradient(#8a8a8a, #8a8a8a) 0 2px / 2px 1px no-repeat;
}
.pale {
  background: #f3f3f3;
}
.assembly .vbar {
  padding: 7px 0 4px;
}
.assembly .vbar .mid {
  height: 97px;
  margin-top: 5px;
}
.assembly .hbar {
  grid-column: 1;
  justify-content: space-between;
  padding: 0 6px 0 6px;
}
.assembly .hbar .thumb {
  width: 141px;
  margin-left: 4px;
}
.grip {
  position: absolute;
  right: 0;
  bottom: 0;
}
.pointer {
  position: absolute;
  left: 66px;
  top: 130px;
}
.explode {
  position: absolute;
  top: 6px;
  right: 75px;
  width: 240px;
  height: 130px;
  background: rgba(48, 48, 48, 0.87);
  text-align: center;
}
.explode header {
  display: flex;
  align-items: center;
  justify-content: space-between;
  height: 25px;
  padding: 0 9px;
  background: #000;
  color: #fff;
  font-size: 14px;
  line-height: 16px;
}
.explode label {
  display: block;
  margin-top: 21px;
  color: #9a9a9a;
}
.slider {
  width: 210px;
  height: 43px;
  margin: 8px 15px 0;
  padding: 9px 11px;
  border-radius: 4px;
  background: #777;
}
.slider input {
  appearance: none;
  display: block;
  width: 100%;
  height: 25px;
  background: #222;
}
.slider input::-webkit-slider-thumb {
  appearance: none;
  width: 25px;
  height: 25px;
  background:
    repeating-linear-gradient(90deg, #600 0 1px, transparent 1px 3px) 9px 8px / 7px 9px no-repeat,
    linear-gradient(90deg, #999 8px, #e02b20 8px 17px, #999 17px);
  clip-path: polygon(1px 50%, 4px 38%, 4px 50%, 8px 50%, 8px 0, 17px 0, 17px 50%, 21px 50%, 21px 38%, 24px 50%, 21px 62%, 21px 50%, 17px 50%, 17px 100%, 8px 100%, 8px 50%, 4px 50%, 4px 62%);
}
.orbit {
  position: absolute;
  top: 5px;
  right: 10px;
  display: grid;
  gap: 4px;
}
.orbit button {
  border-radius: 3px;
  background: #dc2a26;
}
.orbit .views {
  height: 32px;
  color: #fff;
  font: bold 11px/16px 'Liberation Sans', sans-serif;
}
.trouble {
  position: absolute;
  left: 15px;
  bottom: 9px;
  color: #3d9fe6;
  font-weight: bold;
  text-decoration: none;
}
.mark {
  position: absolute;
  right: 11px;
  bottom: 7px;
  color: #fafafa;
  font: bold 27px/28px Lato, sans-serif;
}
.mark b {
  color: #c4302b;
  font-weight: 900;
}

/* Right column */
.info {
  display: flex;
  flex: none;
  flex-direction: column;
  width: 295px;
  margin: 0 4px 0 21px;
  color: #6a6a6a;
}
h2 {
  display: flex;
  align-items: center;
  gap: 5px;
  height: 40px;
  margin: 0;
  padding: 0 4px 0 1px;
  color: #000;
  font-size: 12px;
  line-height: 16px;
}
.fold {
  margin-left: auto;
}
dl {
  display: grid;
  grid-template-columns: 77px 166px;
  row-gap: 10px;
  margin: 5px 0 15px 26px;
}
dt {
  font-weight: bold;
}
dd {
  margin: 0;
  word-break: break-all;
}
dd .version {
  display: block;
  width: 27px;
  text-align: center;
}
hr {
  width: 100%;
  margin: 0;
  border: 0;
  border-top: 1px solid #c6c6c6;
}
.comment {
  display: flex;
  flex-direction: column;
  align-items: flex-end;
  gap: 9px;
  padding: 7px 8px 27px;
}
.comment input {
  width: 100%;
  height: 32px;
  padding: 0 6px;
  border: 2px solid #4a9fd0;
  border-radius: 3px;
  background: #fbfbfb;
  font-size: 14px;
}
.comment input::placeholder {
  color: #a0a0a0;
}
.comment button {
  width: 53px;
  height: 28px;
  padding-top: 2px;
  border-radius: 3px;
  background: #33a5fc;
  color: #fff;
  font-size: 14px;
  font-weight: bold;
}
.feedback {
  align-self: flex-end;
  width: 100px;
  height: 38px;
  margin: auto 16px 20px 0;
  border: 1px solid #d6d6d6;
  border-radius: 5px;
  background: linear-gradient(#fafafa, #f0f0f0);
  color: #666;
  font: bold 15px/20px 'Open Sans', sans-serif;
  font-variant: small-caps;
}
</style>
